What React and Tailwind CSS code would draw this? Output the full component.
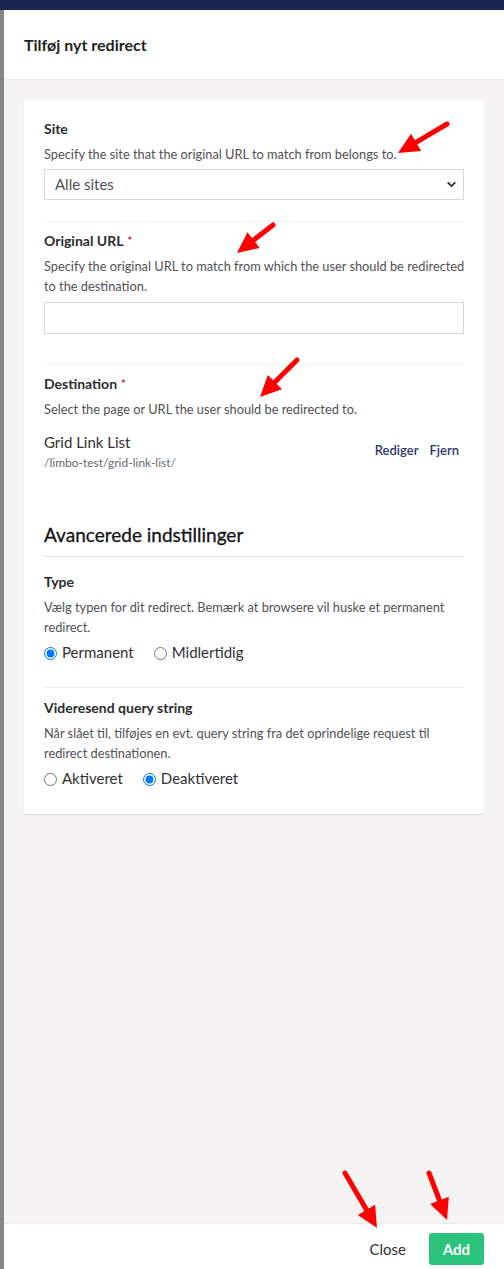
import React from "react";
import { ChevronDown } from "lucide-react";

// red annotation arrow, drawn from tail to tip
const Arrow = ({ x1, y1, x2, y2 }) => {
  const dx = x2 - x1;
  const dy = y2 - y1;
  const len = Math.sqrt(dx * dx + dy * dy);
  const ux = dx / len;
  const uy = dy / len;
  const head = 21;
  const half = 10;
  const bx = x2 - ux * head;
  const by = y2 - uy * head;
  const pts = [
    [x2, y2],
    [bx - uy * half, by + ux * half],
    [bx + uy * half, by - ux * half],
  ]
    .map((p) => p.join(","))
    .join(" ");
  return (
    <g>
      <line
        x1={x1}
        y1={y1}
        x2={bx + ux * 2}
        y2={by + uy * 2}
        stroke="#ff0000"
        strokeWidth="5"
        strokeLinecap="round"
      />
      <polygon points={pts} fill="#ff0000" />
    </g>
  );
};

const Label = ({ children, required }) => (
  <div className="text-[14px] leading-[18px] font-bold text-[#2b2b2e]">
    {children}
    {required && <span className="text-[#d42054] text-[11px] ml-1 align-top">*</span>}
  </div>
);

const Desc = ({ children }) => (
  <p className="mt-1.5 mr-[-8px] text-[12.8px] leading-5 text-[#515054]">{children}</p>
);

const Radio = ({ name, label, checked }) => (
  <label className="flex items-center gap-[5px] text-[15px] leading-5 text-[#303033]">
    <input
      type="radio"
      name={name}
      defaultChecked={checked}
      className="m-0 w-[13px] h-[13px] mt-[2px]"
    />
    {label}
  </label>
);

const App = () => {
  return (
    <div
      className="relative w-full h-[1269px] flex flex-col overflow-hidden"
      style={{ fontFamily: "Lato, 'Open Sans', sans-serif" }}
    >
      <div className="h-[10px] bg-[#1b264f] shrink-0" />
      <div className="flex flex-1 min-h-0">
        <div className="w-[4px] bg-[#858585] shrink-0" />
        <div className="flex-1 flex flex-col bg-white">
          {/* header */}
          <div className="h-[70px] shrink-0 flex items-center px-5 border-b border-[#e9e9eb]">
            <h2 className="text-[16px] font-bold text-[#1f1f22]">Tilføj nyt redirect</h2>
          </div>

          {/* body */}
          <div className="flex-1 bg-[#f5f3f4] px-5 pt-5">
            <div className="bg-white rounded-[3px] shadow-[0_1px_1px_rgba(0,0,0,0.12)] px-5 pt-5 pb-[26px]">
              {/* site */}
              <div className="pb-[21px] border-b border-[#f0eff1]">
                <Label>Site</Label>
                <Desc>Specify the site that the original URL to match from belongs to.</Desc>
                <div className="relative mt-[5px]">
                  <select className="appearance-none w-full h-[31px] border border-[#d8d7d9] bg-white pl-[10px] text-[15px] text-[#515054] outline-none">
                    <option>Alle sites</option>
                  </select>
                  <ChevronDown
                    size={13}
                    strokeWidth={3.5}
                    className="absolute right-[6px] top-[9px] text-[#333] pointer-events-none"
                  />
                </div>
              </div>

              {/* original url */}
              <div className="pt-[10px] pb-[30px] border-b border-[#f0eff1]">
                <Label required>Original URL</Label>
                <Desc>
                  Specify the original URL to match from which the user should be redirected to
                  the destination.
                </Desc>
                <input
                  type="text"
                  className="mt-[6px] block w-full h-8 border border-[#d8d7d9] bg-white outline-none"
                />
              </div>

              {/* destination */}
              <div className="pt-[10px]">
                <Label required>Destination</Label>
                <Desc>Select the page or URL the user should be redirected to.</Desc>
                <div className="mt-3 flex items-center justify-between">
                  <div>
                    <div className="text-[15px] leading-5 text-[#303033] pt-px">Grid Link List</div>
                    <div className="mt-[3px] text-[12px] leading-4 text-[#68676b]">
                      /limbo-test/grid-link-list/
                    </div>
                  </div>
                  <div className="flex gap-[11px] pr-[5px] text-[13px] font-semibold text-[#2a3768]">
                    <span>Rediger</span>
                    <span>Fjern</span>
                  </div>
                </div>
              </div>

              {/* advanced */}
              <h3 className="mt-[50px] text-[19px] leading-7 font-normal text-[#141416] pb-[7px] border-b border-[#e9e9eb] [-webkit-text-stroke:0.3px_#141416]">
                Avancerede indstillinger
              </h3>

              <div className="pt-4 pb-[25px] border-b border-[#f0eff1]">
                <Label>Type</Label>
                <Desc>
                  Vælg typen for dit redirect. Bemærk at browsere vil huske et permanent redirect.
                </Desc>
                <div className="mt-[5px] flex gap-[20px]">
                  <Radio name="type" label="Permanent" checked />
                  <Radio name="type" label="Midlertidig" />
                </div>
              </div>

              <div className="pt-[11px]">
                <Label>Videresend query string</Label>
                <Desc>
                  Når slået til, tilføjes en evt. query string fra det oprindelige request til
                  redirect destinationen.
                </Desc>
                <div className="mt-[5px] flex gap-[20px]">
                  <Radio name="qs" label="Aktiveret" />
                  <Radio name="qs" label="Deaktiveret" checked />
                </div>
              </div>
            </div>
          </div>

          {/* footer */}
          <div className="h-[46px] shrink-0 border-t border-[#e9e9eb] flex items-start justify-end gap-[23px] px-5 pt-[9px]">
            <button className="mt-[5px] text-[15px] text-[#303033]">Close</button>
            <button className="h-8 w-[55px] rounded-[3px] bg-[#2bc37c] text-white text-[15px] font-bold">
              Add
            </button>
          </div>
        </div>
      </div>

      {/* annotation arrows */}
      <svg
        className="absolute inset-0 pointer-events-none"
        width="504"
        height="1269"
        viewBox="0 0 504 1269"
      >
        <Arrow x1={447} y1={124} x2={398} y2={153} />
        <Arrow x1={273} y1={225} x2={237} y2={253} />
        <Arrow x1={297} y1={360} x2={260} y2={397} />
        <Arrow x1={345} y1={1173} x2={377} y2={1228} />
        <Arrow x1={429} y1={1173} x2={447} y2={1220} />
      </svg>
    </div>
  );
};

export default App;
